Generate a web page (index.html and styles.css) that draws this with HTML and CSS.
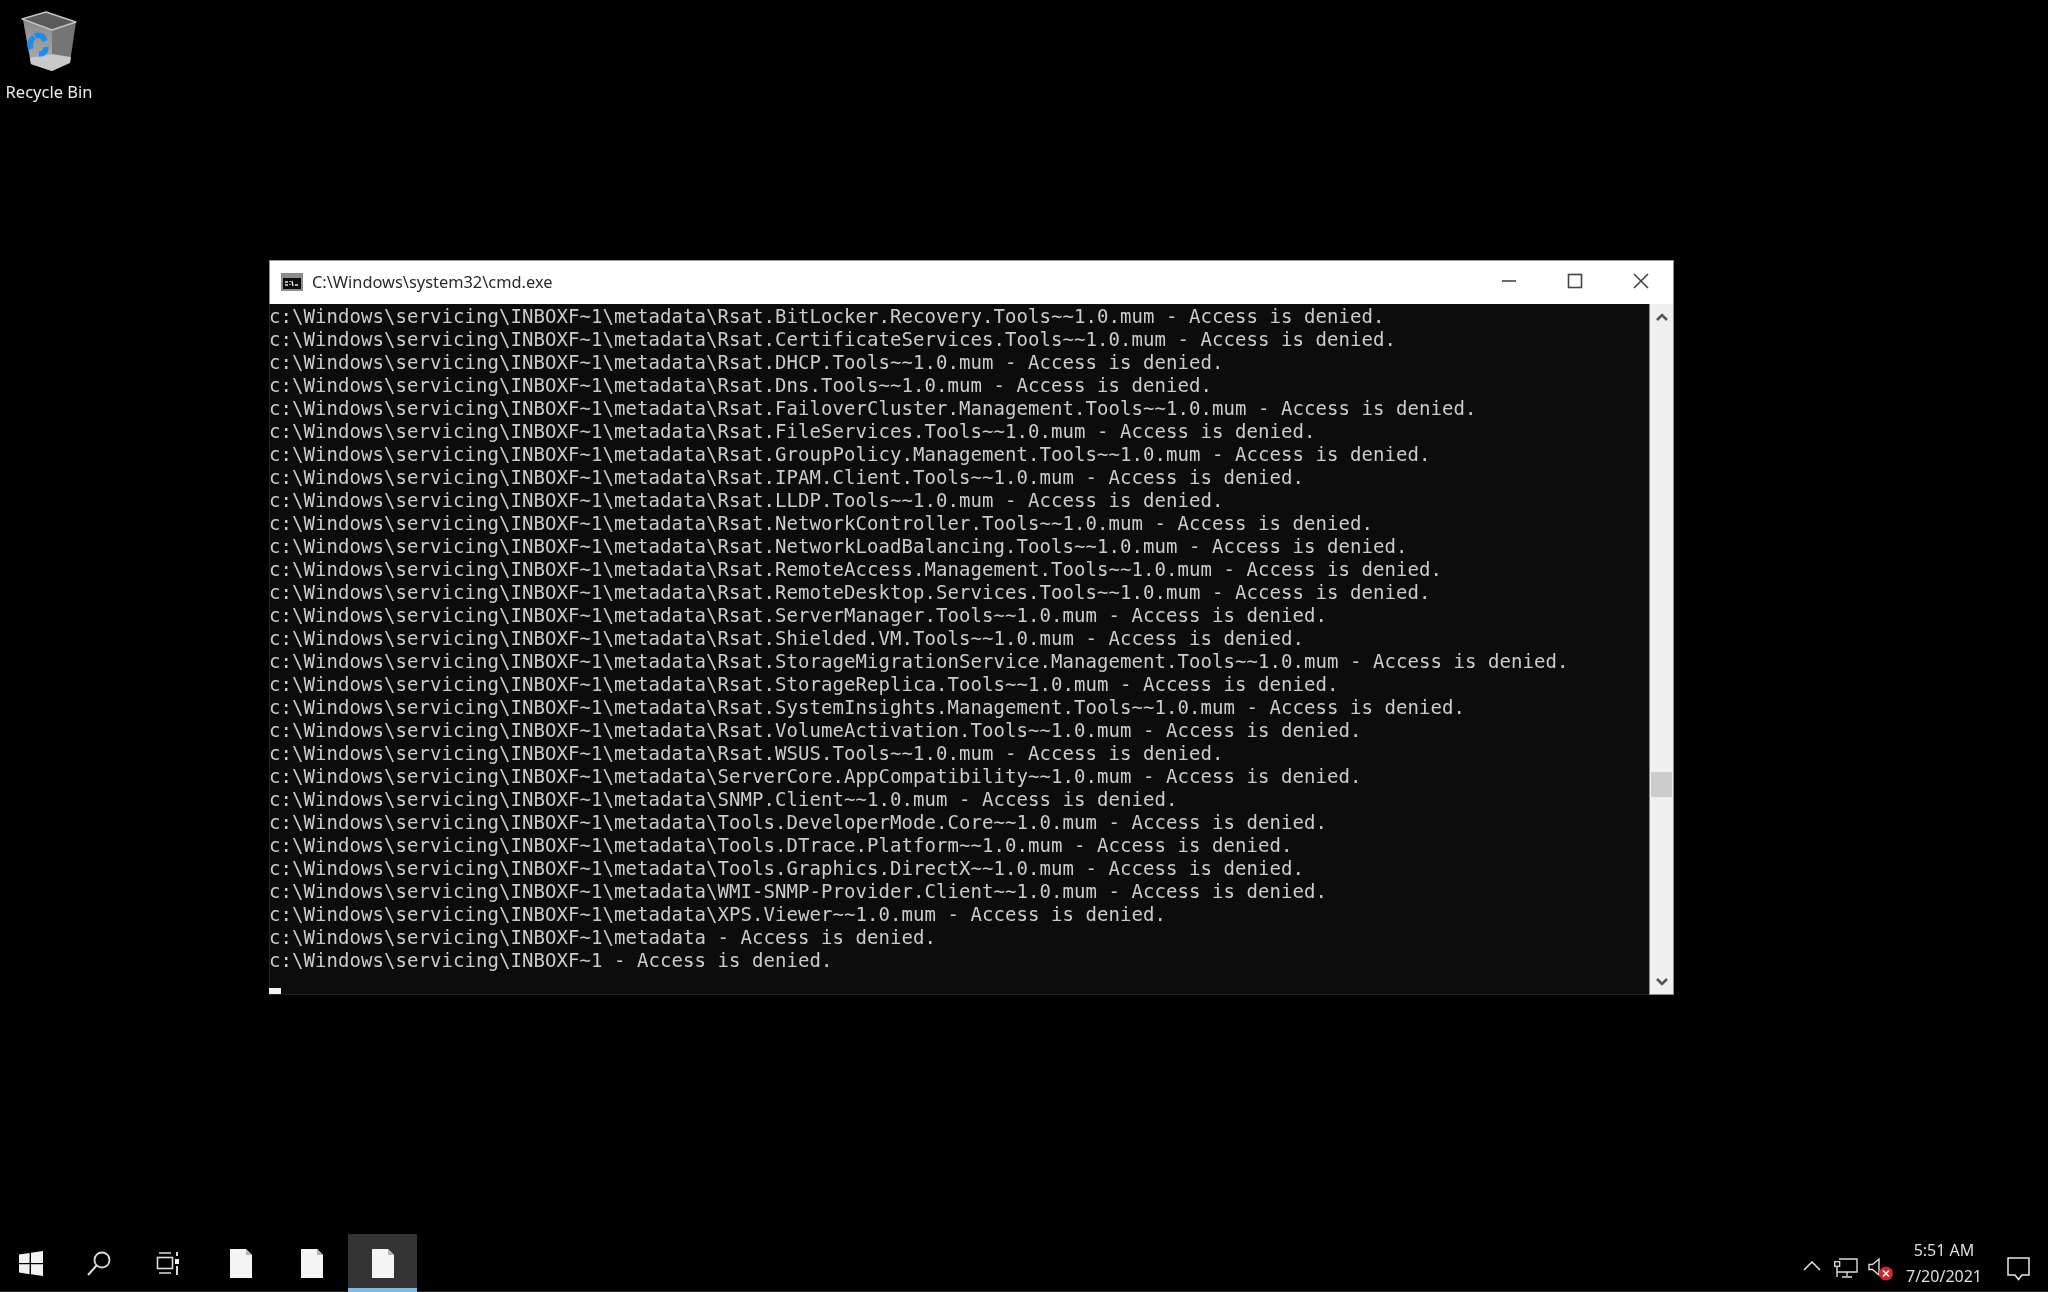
FILE: index.html
```html
<!DOCTYPE html>
<html lang="en">
<head>
<meta charset="utf-8">
<title>cmd.exe</title>
<link rel="stylesheet" href="styles.css">
</head>
<body>
<main class="desktop">
  <div class="desk-icon">
    <svg class="bin" width="60" height="76" viewBox="20 8 60 76">
      <defs>
        <linearGradient id="binBody" x1="0" y1="0" x2="0" y2="1">
          <stop offset="0" stop-color="#8a8a8a"/>
          <stop offset=".7" stop-color="#a6a6a6"/>
          <stop offset="1" stop-color="#dadada"/>
        </linearGradient>
        <g id="docShape">
          <path d="M0 0h16l6 6v23H0z" fill="#f4f4f4"/>
          <path d="M16 0l6 6h-6z" fill="#b5b5b5"/>
        </g>
      </defs>
      <path d="M23 20 L52 30 L52 71 L31 64 Z" fill="url(#binBody)"/>
      <path d="M52 30 L76 22 L70 62 L52 71 Z" fill="#757575"/>
      <path d="M30 58 L52 54 L71 57 L70 63 L52 71 L31 64 Z" fill="#c9c9c9"/>
      <path d="M22 19 L46 12 L76 22 L52 30 Z" fill="#5a5a5a" stroke="#c4c4c4" stroke-width="1.4" stroke-linejoin="round"/>
      <g fill="none" stroke="#1c8cf0" stroke-width="5.500">
        <path d="M31 49 Q28 42 34 37"/>
        <path d="M35 36 Q42 33 45 41"/>
        <path d="M46 47 Q46 54 39 54"/>
      </g>
    </svg>
    <span class="desk-label">Recycle Bin</span>
  </div>

  <section class="window">
    <header class="titlebar">
      <svg class="app-icon" width="22" height="18" viewBox="0 0 22 18">
        <rect width="22" height="18" fill="#8c8c8c"/>
        <rect x="2" y="5" width="18" height="11" fill="#0c0c0c"/>
        <path d="M4 9h3M4 12h3M9 8v1M9 11v1M11 8l1 5M14 12h3" stroke="#e6e6e6" stroke-width="1.4" fill="none"/>
      </svg>
      <span class="title">C:\Windows\system32\cmd.exe</span>
      <div class="controls">
        <svg width="16" height="16" viewBox="0 0 16 16"><path d="M1 8h14" stroke="#444" stroke-width="1.6"/></svg>
        <svg width="16" height="16" viewBox="0 0 16 16"><rect x="1.500" y="1.500" width="13" height="13" fill="none" stroke="#444" stroke-width="1.6"/></svg>
        <svg width="16" height="16" viewBox="0 0 16 16"><path d="M1 1l14 14M15 1L1 15" stroke="#444" stroke-width="1.6"/></svg>
      </div>
    </header>
    <div class="client">
      <div class="console"><pre class="output">c:\Windows\servicing\INBOXF~1\metadata\Rsat.BitLocker.Recovery.Tools~~1.0.mum - Access is denied.
c:\Windows\servicing\INBOXF~1\metadata\Rsat.CertificateServices.Tools~~1.0.mum - Access is denied.
c:\Windows\servicing\INBOXF~1\metadata\Rsat.DHCP.Tools~~1.0.mum - Access is denied.
c:\Windows\servicing\INBOXF~1\metadata\Rsat.Dns.Tools~~1.0.mum - Access is denied.
c:\Windows\servicing\INBOXF~1\metadata\Rsat.FailoverCluster.Management.Tools~~1.0.mum - Access is denied.
c:\Windows\servicing\INBOXF~1\metadata\Rsat.FileServices.Tools~~1.0.mum - Access is denied.
c:\Windows\servicing\INBOXF~1\metadata\Rsat.GroupPolicy.Management.Tools~~1.0.mum - Access is denied.
c:\Windows\servicing\INBOXF~1\metadata\Rsat.IPAM.Client.Tools~~1.0.mum - Access is denied.
c:\Windows\servicing\INBOXF~1\metadata\Rsat.LLDP.Tools~~1.0.mum - Access is denied.
c:\Windows\servicing\INBOXF~1\metadata\Rsat.NetworkController.Tools~~1.0.mum - Access is denied.
c:\Windows\servicing\INBOXF~1\metadata\Rsat.NetworkLoadBalancing.Tools~~1.0.mum - Access is denied.
c:\Windows\servicing\INBOXF~1\metadata\Rsat.RemoteAccess.Management.Tools~~1.0.mum - Access is denied.
c:\Windows\servicing\INBOXF~1\metadata\Rsat.RemoteDesktop.Services.Tools~~1.0.mum - Access is denied.
c:\Windows\servicing\INBOXF~1\metadata\Rsat.ServerManager.Tools~~1.0.mum - Access is denied.
c:\Windows\servicing\INBOXF~1\metadata\Rsat.Shielded.VM.Tools~~1.0.mum - Access is denied.
c:\Windows\servicing\INBOXF~1\metadata\Rsat.StorageMigrationService.Management.Tools~~1.0.mum - Access is denied.
c:\Windows\servicing\INBOXF~1\metadata\Rsat.StorageReplica.Tools~~1.0.mum - Access is denied.
c:\Windows\servicing\INBOXF~1\metadata\Rsat.SystemInsights.Management.Tools~~1.0.mum - Access is denied.
c:\Windows\servicing\INBOXF~1\metadata\Rsat.VolumeActivation.Tools~~1.0.mum - Access is denied.
c:\Windows\servicing\INBOXF~1\metadata\Rsat.WSUS.Tools~~1.0.mum - Access is denied.
c:\Windows\servicing\INBOXF~1\metadata\ServerCore.AppCompatibility~~1.0.mum - Access is denied.
c:\Windows\servicing\INBOXF~1\metadata\SNMP.Client~~1.0.mum - Access is denied.
c:\Windows\servicing\INBOXF~1\metadata\Tools.DeveloperMode.Core~~1.0.mum - Access is denied.
c:\Windows\servicing\INBOXF~1\metadata\Tools.DTrace.Platform~~1.0.mum - Access is denied.
c:\Windows\servicing\INBOXF~1\metadata\Tools.Graphics.DirectX~~1.0.mum - Access is denied.
c:\Windows\servicing\INBOXF~1\metadata\WMI-SNMP-Provider.Client~~1.0.mum - Access is denied.
c:\Windows\servicing\INBOXF~1\metadata\XPS.Viewer~~1.0.mum - Access is denied.
c:\Windows\servicing\INBOXF~1\metadata - Access is denied.
c:\Windows\servicing\INBOXF~1 - Access is denied.</pre><div class="cursor"></div></div>
      <div class="scrollbar">
        <svg width="14" height="10" viewBox="0 0 14 10"><path d="M2 8l5-5 5 5" fill="none" stroke="#555" stroke-width="2.6"/></svg>
        <div class="thumb"></div>
        <svg width="14" height="10" viewBox="0 0 14 10"><path d="M2 2l5 5 5-5" fill="none" stroke="#555" stroke-width="2.6"/></svg>
      </div>
    </div>
  </section>

  <footer class="taskbar">
    <div class="tb-left">
      <button class="tb-btn tb-start">
        <svg width="24" height="25" viewBox="0 0 24 25"><path d="M0 3.600L10.600 2v10H0zM12 1.800L24 0v12H12zM0 13.200h10.600v10L0 21.600zM12 13.200h12V25l-12-1.800z" fill="#f2f2f2"/></svg>
      </button>
      <button class="tb-btn tb-search">
        <svg width="24" height="25" viewBox="0 0 24 25"><circle cx="15" cy="9" r="7.500" fill="none" stroke="#dcdcdc" stroke-width="1.8"/><path d="M9.500 14.500L1 24" stroke="#dcdcdc" stroke-width="2"/></svg>
      </button>
      <button class="tb-btn tb-tasks">
        <svg width="23" height="23" viewBox="0 0 23 23"><path d="M3 1h12M3 21h12" stroke="#dcdcdc" stroke-width="1.6"/><rect x="1.500" y="5.500" width="15" height="11" fill="none" stroke="#dcdcdc" stroke-width="1.6"/><rect x="20" y="0" width="2" height="4" fill="#dcdcdc"/><rect x="19" y="7" width="4" height="5" fill="#f2f2f2"/><rect x="20" y="14" width="2" height="9" fill="#dcdcdc"/></svg>
      </button>
      <div class="tb-apps">
        <button class="tb-btn tb-app"><svg width="22" height="29" viewBox="0 0 22 29"><use href="#docShape"/></svg></button>
        <button class="tb-btn tb-app"><svg width="22" height="29" viewBox="0 0 22 29"><use href="#docShape"/></svg></button>
        <button class="tb-btn tb-app tb-active"><svg width="22" height="29" viewBox="0 0 22 29"><use href="#docShape"/></svg></button>
      </div>
    </div>
    <div class="tray">
      <svg class="tray-chevron" width="18" height="10" viewBox="0 0 18 10"><path d="M1 9l8-8 8 8" fill="none" stroke="#dcdcdc" stroke-width="1.6"/></svg>
      <svg class="tray-net" width="24" height="20" viewBox="0 0 24 20"><path d="M5 1h18v13H3" fill="none" stroke="#dcdcdc" stroke-width="1.4"/><path d="M13 14v4M8 19h10M3 8v11" stroke="#dcdcdc" stroke-width="1.4"/><rect x=".7" y="3.700" width="5" height="4.600" fill="#000" stroke="#dcdcdc" stroke-width="1.3"/></svg>
      <svg class="tray-vol" width="26" height="24" viewBox="0 0 26 24"><path d="M1 7.500h3.500L11 2v16L4.500 12.500H1z" fill="none" stroke="#dcdcdc" stroke-width="1.4"/><circle cx="18" cy="16.500" r="7" fill="#d2232a"/><path d="M15 13.500l6 6M21 13.500l-6 6" stroke="#fff" stroke-width="1.7"/></svg>
      <div class="clock"><span>5:51 AM</span><span>7/20/2021</span></div>
      <svg class="tray-note" width="23" height="24" viewBox="0 0 23 24"><path d="M1 1h21v17h-7l-3.500 4.500L8 18H1z" fill="none" stroke="#e6e6e6" stroke-width="1.5"/></svg>
    </div>
  </footer>
</main>
</body>
</html>
```
FILE: styles.css
```css
* { box-sizing: border-box; }
html, body { margin: 0; height: 100%; background: #000; }
body { overflow: hidden; }

.desktop {
  position: relative;
  width: 2048px;
  height: 1292px;
  background: #000;
  overflow: hidden;
  filter: blur(.4px);
}

.desk-icon {
  position: absolute;
  left: 0;
  top: 8px;
  width: 98px;
  display: flex;
  flex-direction: column;
  align-items: center;
}
.bin { display: block; margin-left: 1px; }
.desk-label {
  margin-top: -3px;
  font: 16.500px/22px "Noto Sans", sans-serif;
  color: #ececec;
  white-space: nowrap;
}

.window {
  position: absolute;
  left: 269px;
  top: 260px;
  width: 1405px;
  height: 735px;
  display: flex;
  flex-direction: column;
  background: #fff;
}
.titlebar {
  height: 44px;
  flex: none;
  display: flex;
  align-items: center;
  padding: 0 0 2px 11px;
  background: #fff;
  border-top: 1px solid #9a9a9a;
  border-left: 1px solid #8a8a8a;
  border-right: 1px solid #8a8a8a;
}
.app-icon { flex: none; }
.title {
  margin-left: 9px;
  font: 16.400px/22px "Noto Sans", sans-serif;
  color: #2a2a2a;
  white-space: nowrap;
}
.controls {
  margin-left: auto;
  display: flex;
  gap: 50px;
  margin-right: 24px;
  margin-top: -2px;
}
.client { flex: 1; min-height: 0; display: flex; }
.console {
  flex: 1;
  min-width: 0;
  background: #0c0c0c;
  padding-top: 1px;
  position: relative;
  border-left: 1px solid #222;
  border-bottom: 1px solid #222;
}
.output {
  margin: 0 0 0 -1px;
  font: 19px/23px "DejaVu Sans Mono", monospace;
  letter-spacing: .06px;
  color: #cccccc;
  white-space: pre;
}
.cursor {
  position: absolute;
  left: -1px;
  bottom: 0;
  width: 12px;
  height: 6px;
  background: #f2f2f2;
}
.scrollbar {
  flex: none;
  width: 25px;
  position: relative;
  background: #f0f0f0;
  border: 1px solid #8a8a8a;
  border-top: 0;
  display: flex;
  flex-direction: column;
  align-items: center;
  justify-content: space-between;
  padding: 8px 0 7px;
}
.thumb {
  position: absolute;
  left: 1px;
  right: 1px;
  top: 468px;
  height: 25px;
  background: #cdcdcd;
}

.taskbar {
  position: absolute;
  left: 0;
  right: 0;
  bottom: 0;
  height: 58px;
  display: flex;
  justify-content: space-between;
  align-items: stretch;
  background: #000;
  box-shadow: inset 0 -1px 0 #2c2c2c;
}
.tb-left { display: flex; }
.tb-btn {
  border: 0;
  padding: 0;
  margin: 0;
  background: transparent;
  display: flex;
  align-items: center;
  justify-content: center;
  height: 100%;
}
.tb-start { width: 65px; padding-right: 4px; }
.tb-search { width: 68px; }
.tb-tasks { width: 68px; }
.tb-apps { display: flex; gap: 2px; margin-left: 5px; }
.tb-app { width: 69px; }
.tb-active {
  background: #333333;
  border-bottom: 4px solid #7cbcec;
  padding-top: 4px;
}
.tray {
  display: flex;
  align-items: center;
  padding-right: 18px;
}
.tray-chevron { margin-top: 6px; }
.tray-net { margin-left: 13px; margin-top: 9px; }
.tray-vol { margin-left: 10px; margin-top: 12px; }
.clock {
  width: 94px;
  margin-left: 3px;
  display: flex;
  flex-direction: column;
  align-items: center;
  font: 16px/26px "Noto Sans", sans-serif;
  color: #dedede;
}
.tray-note { margin-left: 16px; margin-top: 11px; }
```
